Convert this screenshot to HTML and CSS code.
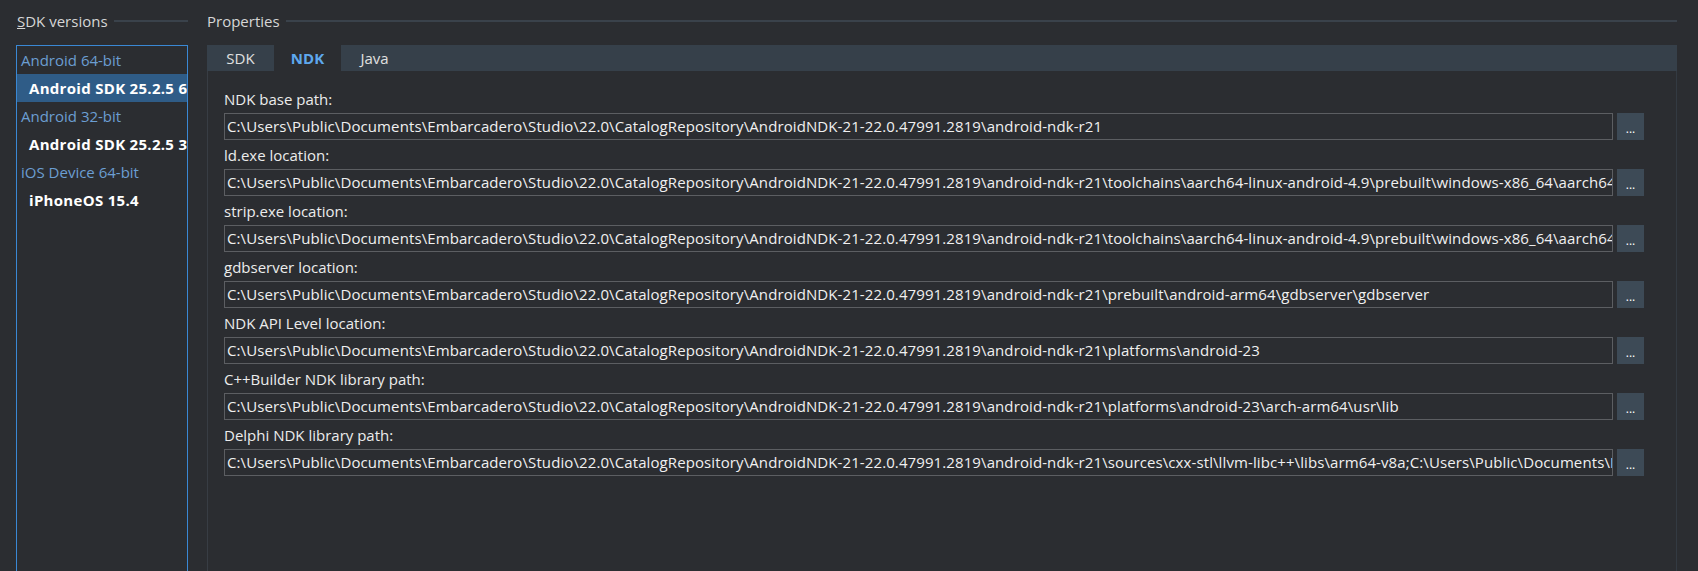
FILE: index.html
```html
<!DOCTYPE html>
<html>
<head>
	<meta charset="utf-8">
	<title>SDK Manager</title>
	<link rel="stylesheet" href="styles.css">
</head>
<body>
	<div class="dialog">
		<div class="versions">
			<div class="group-header">
				<span class="group-title"><u>S</u>DK versions</span>
				<span class="rule"></span>
			</div>
			<div class="sdk-list">
				<div class="list-group">Android 64-bit</div>
				<div class="list-item selected">Android SDK 25.2.5 64-bit</div>
				<div class="list-group">Android 32-bit</div>
				<div class="list-item">Android SDK 25.2.5 32-bit</div>
				<div class="list-group">iOS Device 64-bit</div>
				<div class="list-item">iPhoneOS 15.4</div>
			</div>
		</div>
		<div class="properties">
			<div class="group-header">
				<span class="group-title">Properties</span>
				<span class="rule"></span>
			</div>
			<div class="tab-panel">
				<div class="tabs">
					<div class="tab">SDK</div>
					<div class="tab active">NDK</div>
					<div class="tab">Java</div>
				</div>
				<div class="tab-body">
					<div class="field">
						<div class="field-label">NDK base path:</div>
						<div class="field-row">
							<div class="path-input">C:\Users\Public\Documents\Embarcadero\Studio\22.0\CatalogRepository\AndroidNDK-21-22.0.47991.2819\android-ndk-r21</div>
							<div class="browse">...</div>
						</div>
					</div>
					<div class="field">
						<div class="field-label">ld.exe location:</div>
						<div class="field-row">
							<div class="path-input">C:\Users\Public\Documents\Embarcadero\Studio\22.0\CatalogRepository\AndroidNDK-21-22.0.47991.2819\android-ndk-r21\toolchains\aarch64-linux-android-4.9\prebuilt\windows-x86_64\aarch64-linux-android\bin\ld.exe</div>
							<div class="browse">...</div>
						</div>
					</div>
					<div class="field">
						<div class="field-label">strip.exe location:</div>
						<div class="field-row">
							<div class="path-input">C:\Users\Public\Documents\Embarcadero\Studio\22.0\CatalogRepository\AndroidNDK-21-22.0.47991.2819\android-ndk-r21\toolchains\aarch64-linux-android-4.9\prebuilt\windows-x86_64\aarch64-linux-android\bin\strip.exe</div>
							<div class="browse">...</div>
						</div>
					</div>
					<div class="field">
						<div class="field-label">gdbserver location:</div>
						<div class="field-row">
							<div class="path-input">C:\Users\Public\Documents\Embarcadero\Studio\22.0\CatalogRepository\AndroidNDK-21-22.0.47991.2819\android-ndk-r21\prebuilt\android-arm64\gdbserver\gdbserver</div>
							<div class="browse">...</div>
						</div>
					</div>
					<div class="field">
						<div class="field-label">NDK API Level location:</div>
						<div class="field-row">
							<div class="path-input">C:\Users\Public\Documents\Embarcadero\Studio\22.0\CatalogRepository\AndroidNDK-21-22.0.47991.2819\android-ndk-r21\platforms\android-23</div>
							<div class="browse">...</div>
						</div>
					</div>
					<div class="field">
						<div class="field-label">C++Builder NDK library path:</div>
						<div class="field-row">
							<div class="path-input">C:\Users\Public\Documents\Embarcadero\Studio\22.0\CatalogRepository\AndroidNDK-21-22.0.47991.2819\android-ndk-r21\platforms\android-23\arch-arm64\usr\lib</div>
							<div class="browse">...</div>
						</div>
					</div>
					<div class="field">
						<div class="field-label">Delphi NDK library path:</div>
						<div class="field-row">
							<div class="path-input">C:\Users\Public\Documents\Embarcadero\Studio\22.0\CatalogRepository\AndroidNDK-21-22.0.47991.2819\android-ndk-r21\sources\cxx-stl\llvm-libc++\libs\arm64-v8a;C:\Users\Public\Documents\Embarcadero\Studio\22.0\CatalogRepository\AndroidNDK-21-22.0.47991.2819\android-ndk-r21\platforms\android-23\arch-arm64\usr\lib</div>
							<div class="browse">...</div>
						</div>
					</div>
				</div>
			</div>
		</div>
	</div>
</body>
</html>
```

FILE: styles.css
```css
html, body {
	margin: 0;
	height: 100%;
	overflow: hidden;
}
body {
	background-color: #2b2d31;
	color: #e4e4e4;
	font-family: "Open Sans", "Noto Sans", sans-serif;
	font-size: 15px;
}
.dialog {
	display: flex;
	gap: 19px;
	padding-left: 16px;
}
.versions {
	width: 172px;
	flex: none;
}
.properties {
	width: 1470px;
	flex: none;
}
.group-header {
	display: flex;
	align-items: center;
	gap: 6px;
	height: 30px;
	padding-top: 6px;
	margin-bottom: 9px;
}
.versions .group-header {
	padding-left: 1px;
}
.group-title {
	color: #d6d6d6;
	white-space: nowrap;
}
.rule {
	flex: 1;
	height: 2px;
	background-color: #3a424b;
}
.sdk-list {
	height: 560px;
	border: 1px solid #3a88d4;
	overflow: hidden;
}
.list-group,
.list-item {
	height: 28px;
	line-height: 28px;
	white-space: nowrap;
	overflow: hidden;
}
.list-group {
	padding-left: 4px;
	color: #6b9ed2;
}
.list-item {
	padding-left: 12px;
	font-weight: bold;
	letter-spacing: 0.3px;
	color: #ffffff;
}
.list-item.selected {
	background-color: #2f5c87;
}
.tab-panel {
	margin-top: 1px;
}
.tabs {
	display: flex;
	height: 26px;
	background-color: #36404a;
}
.tab {
	width: 67px;
	line-height: 26px;
	text-align: center;
	color: #e0e0e0;
}
.tab.active {
	background-color: #2b2d31;
	color: #5ea8ee;
	font-weight: bold;
}
.tab-body {
	height: 560px;
	border-left: 1px solid #383d44;
	border-right: 1px solid #333a42;
	padding: 14px 32px 0 16px;
}
.field {
	margin-bottom: 1px;
}
.field-label {
	height: 28px;
	line-height: 28px;
	color: #ececec;
}
.field-row {
	display: flex;
	gap: 4px;
}
.path-input {
	flex: 1;
	min-width: 0;
	height: 25px;
	line-height: 25px;
	padding-left: 2px;
	border: 1px solid #5c5e62;
	white-space: nowrap;
	overflow: hidden;
	letter-spacing: 0.1px;
	color: #f0f0f0;
}
.browse {
	flex: none;
	width: 27px;
	height: 27px;
	background-color: #3d4a56;
	color: #ffffff;
	font-size: 12px;
	line-height: 32px;
	text-align: center;
}
```
